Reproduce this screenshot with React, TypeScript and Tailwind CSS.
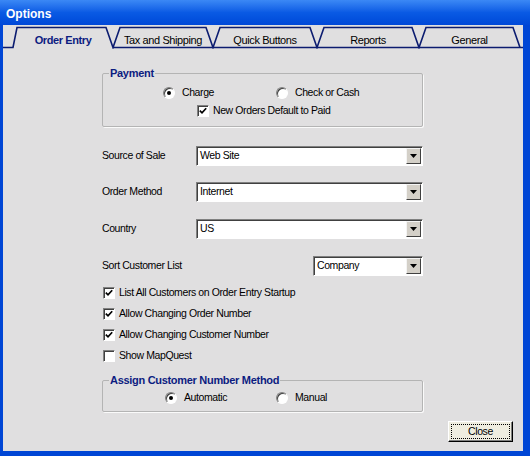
import React from "react";

const font = { fontFamily: '"Liberation Sans", Arial, sans-serif' };

function Radio({ checked, label }: { checked?: boolean; label: string }) {
  return (
    <div className="flex h-[13px] items-center gap-[7px]">
      <span className="flex h-[12px] w-[12px] shrink-0 items-center justify-center rounded-full border border-t-[#808080] border-l-[#808080] border-b-white border-r-white bg-white shadow-[inset_1px_1px_0_#404040]">
        {checked ? <span className="h-[4px] w-[4px] rounded-full bg-black" /> : null}
      </span>
      <span>{label}</span>
    </div>
  );
}

function Check({ checked, label }: { checked?: boolean; label: string }) {
  return (
    <div className="flex h-[13px] items-center gap-[4px]">
      <span className="flex h-[12px] w-[12px] shrink-0 items-center justify-center border border-t-[#808080] border-l-[#808080] border-b-white border-r-white bg-white shadow-[inset_1px_1px_0_#404040]">
        {checked ? (
          <svg width="8" height="8" viewBox="0 0 8 8">
            <path d="M0.8 3.6 L3 5.8 L7.2 1.2" stroke="#000" strokeWidth="1.7" fill="none" />
          </svg>
        ) : null}
      </span>
      <span>{label}</span>
    </div>
  );
}

function Select({ value, className }: { value: string; className: string }) {
  return (
    <div className={`flex h-[20px] items-stretch border border-t-[#808080] border-l-[#808080] border-b-white border-r-white bg-white shadow-[inset_1px_1px_0_#404040] ${className}`}>
      <span className="flex flex-1 items-center pl-[3px]">{value}</span>
      <span className="my-[1px] mr-[1px] flex w-[15px] items-center justify-center border border-t-[#f4f4f4] border-l-[#f4f4f4] border-b-[#404040] border-r-[#404040] bg-[#d4d0c8]">
        <svg width="7" height="4" viewBox="0 0 7 4">
          <path d="M0 0 H7 L3.5 4 Z" fill="#000" />
        </svg>
      </span>
    </div>
  );
}

function Group({ title, children, className }: { title: string; children: React.ReactNode; className: string }) {
  return (
    <div className={`relative w-[321px] rounded-[2px] border border-[#b4b4b4] shadow-[1px_1px_0_#fafafa] ${className}`}>
      <span className="absolute left-[6px] top-[-8px] bg-[#e0dfe0] px-[1px] text-[11px] font-bold leading-[14px] tracking-[-0.3px] text-[#0c1c80]">
        {title}
      </span>
      {children}
    </div>
  );
}

export default function App() {
  const tabs = [
    { name: "Order Entry", w: 100 },
    { name: "Tax and Shipping", w: 100 },
    { name: "Quick Buttons", w: 104 },
    { name: "Reports", w: 102 },
    { name: "General", w: 101 },
  ];
  return (
    <div className="flex h-[456px] w-[530px] flex-col overflow-hidden bg-[#0046d5] text-[10.5px] tracking-[-0.4px] text-black" style={font}>
      <div className="flex h-[25px] shrink-0 items-center bg-gradient-to-b from-[#3b88f5] via-[#0a5ae4] to-[#0048d8] pl-[6px] pt-[3px] text-[12px] font-bold tracking-normal text-white">
        Options
      </div>
      <div className="ml-[3px] mr-[7px] flex h-[426px] shrink-0 flex-col bg-[#e0dfe0]">
        <div className="relative h-[24px] shrink-0">
          <svg className="absolute inset-0" width="520" height="24" viewBox="0 0 520 24">
            <path
              d="M0 22.5 H10 L14 2.5 H103 L110 22.5 L117 2.5 H203 L210 22.5 L217 2.5 H307 L314 22.5 L321 2.5 H409 L416 22.5 L423 2.5 H510 L517 22.5 M110 22.5 H520"
              stroke="#0c1c70"
              strokeWidth="1.6"
              fill="none"
            />
          </svg>
          <div className="relative flex h-full pl-[10px]">
            {tabs.map((t, i) => (
              <div
                key={t.name}
                className={`flex items-center justify-center pt-[6px] text-[11px] ${i === 0 ? "font-bold text-[#0c1c80]" : ""}`}
                style={{ width: t.w }}
              >
                {t.name}
              </div>
            ))}
          </div>
        </div>

        <div className="flex flex-col pl-[99px] pt-[24px]">
          <Group title="Payment" className="h-[54px]">
            <div className="flex pl-[60px] pt-[12px]">
              <div className="w-[113px]">
                <Radio checked label="Charge" />
              </div>
              <Radio label="Check or Cash" />
            </div>
            <div className="pl-[94px] pt-[5px]">
              <Check checked label="New Orders Default to Paid" />
            </div>
          </Group>

          <div className="mt-[19px] flex w-[321px] items-center justify-between">
            <span>Source of Sale</span>
            <Select value="Web Site" className="w-[227px]" />
          </div>
          <div className="mt-[16px] flex w-[321px] items-center justify-between">
            <span>Order Method</span>
            <Select value="Internet" className="w-[227px]" />
          </div>
          <div className="mt-[17px] flex w-[321px] items-center justify-between">
            <span>Country</span>
            <Select value="US" className="w-[227px]" />
          </div>
          <div className="mt-[17px] flex w-[321px] items-center justify-between">
            <span>Sort Customer List</span>
            <Select value="Company" className="w-[110px]" />
          </div>

          <div className="mt-[10px] flex flex-col gap-[8px] pl-[1px]">
            <Check checked label="List All Customers on Order Entry Startup" />
            <Check checked label="Allow Changing Order Number" />
            <Check checked label="Allow Changing Customer Number" />
            <Check label="Show MapQuest" />
          </div>

          <Group title="Assign Customer Number Method" className="mt-[18px] h-[32px]">
            <div className="flex pl-[62px] pt-[10px]">
              <div className="w-[111px]">
                <Radio checked label="Automatic" />
              </div>
              <Radio label="Manual" />
            </div>
          </Group>
        </div>

        <div className="flex justify-end pr-[10px] pt-[9px]">
          <button className="h-[21px] w-[65px] border border-t-white border-l-white border-b-black border-r-black bg-[#efede0] p-[2px] shadow-[inset_-1px_-1px_0_#808080]">
            <span className="flex h-full items-center justify-center border border-dotted border-black">Close</span>
          </button>
        </div>
      </div>
    </div>
  );
}
